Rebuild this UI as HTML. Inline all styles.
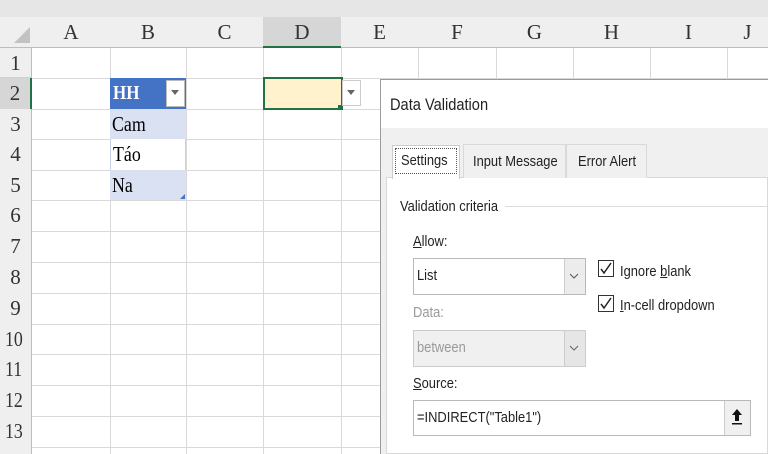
<!DOCTYPE html>
<html><head><meta charset="utf-8"><style>
*{margin:0;padding:0;box-sizing:border-box}
body{width:768px;height:454px;overflow:hidden;background:#fff;position:relative;font-family:"Liberation Serif",serif}
.a{position:absolute}
.colh{top:17px;height:31px;background:#efefef;border-bottom:1px solid #bdbdbd;font-size:21px;text-align:center;line-height:31px;color:#333}
.rowh{left:0;width:32px;background:#efefef;border-right:1px solid #bdbdbd;font-size:21px;text-align:center;color:#333}
.vl{top:48px;bottom:0;width:1px;background:#d9d9d9}
.hl{left:32px;right:0;height:1px;background:#d9d9d9}
.d{font-family:"Liberation Sans",sans-serif;font-size:15px;color:#222;transform:scaleX(.86);transform-origin:left;white-space:nowrap}
.cb{width:16px;height:17px;border:1px solid #333;background:#fff}
.s{display:inline-block;transform:scaleX(.85);transform-origin:left}
</style></head><body>
<div class="a" style="left:0;top:0;width:768px;height:17px;background:#e6e6e6"></div>
<div class="a colh" style="left:0;width:32px"></div>
<svg class="a" style="left:14px;top:27px" width="16" height="16"><polygon points="16,0 16,16 0,16" fill="#c2c2c2"/></svg>
<div class="a colh" style="left:32px;width:78px">A</div>
<div class="a colh" style="left:110px;width:76px">B</div>
<div class="a colh" style="left:186px;width:77px">C</div>
<div class="a colh" style="left:263px;width:78px;background:#d6d6d6;border-bottom:2px solid #217346">D</div>
<div class="a colh" style="left:341px;width:77px">E</div>
<div class="a colh" style="left:418px;width:78px">F</div>
<div class="a colh" style="left:496px;width:77px">G</div>
<div class="a colh" style="left:573px;width:77px">H</div>
<div class="a colh" style="left:650px;width:77px">I</div>
<div class="a colh" style="left:727px;width:41px">J</div>
<div class="a vl" style="left:110px"></div><div class="a vl" style="left:186px"></div><div class="a vl" style="left:263px"></div><div class="a vl" style="left:341px"></div><div class="a vl" style="left:418px"></div><div class="a vl" style="left:496px"></div><div class="a vl" style="left:573px"></div><div class="a vl" style="left:650px"></div><div class="a vl" style="left:727px"></div>
<div class="a hl" style="top:78px"></div><div class="a hl" style="top:109px"></div><div class="a hl" style="top:139px"></div><div class="a hl" style="top:170px"></div><div class="a hl" style="top:200px"></div><div class="a hl" style="top:231px"></div><div class="a hl" style="top:262px"></div><div class="a hl" style="top:293px"></div><div class="a hl" style="top:324px"></div><div class="a hl" style="top:354px"></div><div class="a hl" style="top:385px"></div><div class="a hl" style="top:416px"></div><div class="a hl" style="top:447px"></div>
<div class="a rowh" style="top:48px;height:406px"></div>
<div class="a rowh" style="top:48px;height:30px;line-height:30px;border-bottom:1px solid #d0d0d0">1</div>
<div class="a rowh" style="top:78px;height:31px;line-height:31px;background:#d6d6d6;border-right:2px solid #217346">2</div>
<div class="a rowh" style="top:109px;height:30px;line-height:30px">3</div>
<div class="a rowh" style="top:139px;height:31px;line-height:31px">4</div>
<div class="a rowh" style="top:170px;height:30px;line-height:30px">5</div>
<div class="a rowh" style="top:200px;height:31px;line-height:31px">6</div>
<div class="a rowh" style="top:231px;height:31px;line-height:31px">7</div>
<div class="a rowh" style="top:262px;height:31px;line-height:31px">8</div>
<div class="a rowh" style="top:293px;height:31px;line-height:31px">9</div>
<div class="a rowh" style="top:324px;height:30px;line-height:30px"><span class="s">10</span></div>
<div class="a rowh" style="top:354px;height:31px;line-height:31px"><span class="s">11</span></div>
<div class="a rowh" style="top:385px;height:31px;line-height:31px"><span class="s">12</span></div>
<div class="a rowh" style="top:416px;height:31px;line-height:31px"><span class="s">13</span></div>
<div class="a" style="left:110px;top:78px;width:76px;height:31px;background:#4472c4;color:#fff;font-size:20px;font-weight:bold;padding-left:3px;line-height:31px"><span class="s">HH</span></div>
<div class="a" style="left:166px;top:80px;width:19px;height:27px;background:#fff;border:1px solid #bbb"></div>
<svg class="a" style="left:171px;top:90px" width="8" height="6"><polygon points="0,0 8,0 4,5" fill="#666"/></svg>
<div class="a" style="left:110px;top:109px;width:76px;height:30px;background:#d9e1f2;font-size:21px;padding-left:2px;line-height:30px"><span class="s">Cam</span></div>
<div class="a" style="left:110px;top:139px;width:76px;height:31px;background:#fff;font-size:21px;padding-left:2px;line-height:31px;border-left:1px solid #c6d1ea;border-right:1px solid #c6d1ea"><span class="s">Táo</span></div>
<div class="a" style="left:110px;top:170px;width:76px;height:30px;background:#d9e1f2;font-size:21px;padding-left:2px;line-height:30px"><span class="s">Na</span></div>
<svg class="a" style="left:180px;top:194px" width="5" height="5"><polygon points="5,0 5,5 0,5" fill="#4472c4"/></svg>
<div class="a" style="left:263px;top:77px;width:80px;height:33px;background:#fff2cc;border:2px solid #217346"></div>
<div class="a" style="left:338px;top:105px;width:5px;height:5px;background:#217346"></div>
<div class="a" style="left:342px;top:80px;width:19px;height:26px;background:#fff;border:1px solid #ccc"></div>
<svg class="a" style="left:347px;top:90px" width="8" height="6"><polygon points="0,0 8,0 4,5" fill="#666"/></svg>
<div class="a" style="left:380px;top:79px;width:388px;height:375px;background:#f0f0f0;border:1px solid #9a9a9a;border-right:none;border-bottom:none"></div>
<div class="a" style="left:381px;top:80px;width:387px;height:48px;background:#fff"></div>
<div class="a d" style="left:390px;top:95px;font-size:17px">Data Validation</div>
<div class="a" style="left:386px;top:177px;width:382px;height:277px;background:#fff;border:1px solid #d9d9d9"></div>
<div class="a" style="left:463px;top:144px;width:103px;height:34px;background:#f0f0f0;border:1px solid #d9d9d9;border-bottom:none"></div>
<div class="a" style="left:566px;top:144px;width:81px;height:34px;background:#f0f0f0;border:1px solid #d9d9d9;border-bottom:none"></div>
<div class="a" style="left:392px;top:145px;width:68px;height:34px;background:#fff;border:1px solid #ccc;border-bottom:none"></div>
<div class="a" style="left:395px;top:148px;width:62px;height:26px;border:1px dotted #555"></div>
<div class="a d" style="left:401px;top:152px">Settings</div>
<div class="a d" style="left:473px;top:153px">Input Message</div>
<div class="a d" style="left:578px;top:153px">Error Alert</div>
<div class="a" style="left:505px;top:206px;width:263px;height:1px;background:#ddd"></div>
<div class="a d" style="left:400px;top:198px">Validation criteria</div>
<div class="a d" style="left:413px;top:233px"><u>A</u>llow:</div>
<div class="a" style="left:413px;top:258px;width:173px;height:37px;border:1px solid #b9b9b9;background:#fff"></div>
<div class="a" style="left:564px;top:259px;width:21px;height:35px;background:#ececec;border-left:1px solid #ccc"></div>
<svg class="a" style="left:569px;top:273px" width="10" height="6"><polyline points="1,1 5,5 9,1" fill="none" stroke="#555"/></svg>
<div class="a d" style="left:417px;top:267px">List</div>
<div class="a cb" style="left:598px;top:260px"></div>
<svg class="a" style="left:599px;top:261px" width="14" height="15"><polyline points="2,8 5,12 12,2" fill="none" stroke="#222" stroke-width="1.5"/></svg>
<div class="a d" style="left:620px;top:263px">Ignore <u>b</u>lank</div>
<div class="a cb" style="left:598px;top:295px"></div>
<svg class="a" style="left:599px;top:296px" width="14" height="15"><polyline points="2,8 5,12 12,2" fill="none" stroke="#222" stroke-width="1.5"/></svg>
<div class="a d" style="left:620px;top:297px"><u>I</u>n-cell dropdown</div>
<div class="a d" style="left:413px;top:304px;color:#999">Data:</div>
<div class="a" style="left:413px;top:330px;width:173px;height:37px;border:1px solid #ccc;background:#f0f0f0"></div>
<div class="a" style="left:564px;top:331px;width:21px;height:35px;background:#e6e6e6;border-left:1px solid #ccc"></div>
<svg class="a" style="left:569px;top:345px" width="10" height="6"><polyline points="1,1 5,5 9,1" fill="none" stroke="#666"/></svg>
<div class="a d" style="left:417px;top:339px;color:#999">between</div>
<div class="a d" style="left:413px;top:375px"><u>S</u>ource:</div>
<div class="a" style="left:413px;top:400px;width:338px;height:36px;border:1px solid #b9b9b9;background:#fff"></div>
<div class="a" style="left:724px;top:401px;width:26px;height:34px;background:#f0f0f0;border-left:1px solid #ccc"></div>
<svg class="a" style="left:731px;top:408px" width="12" height="18"><polygon points="6,1 11,7 8,7 8,13 4,13 4,7 1,7" fill="#111"/><rect x="1" y="15" width="10" height="1.5" fill="#111"/></svg>
<div class="a d" style="left:417px;top:409px">=INDIRECT("Table1")</div>
</body></html>
